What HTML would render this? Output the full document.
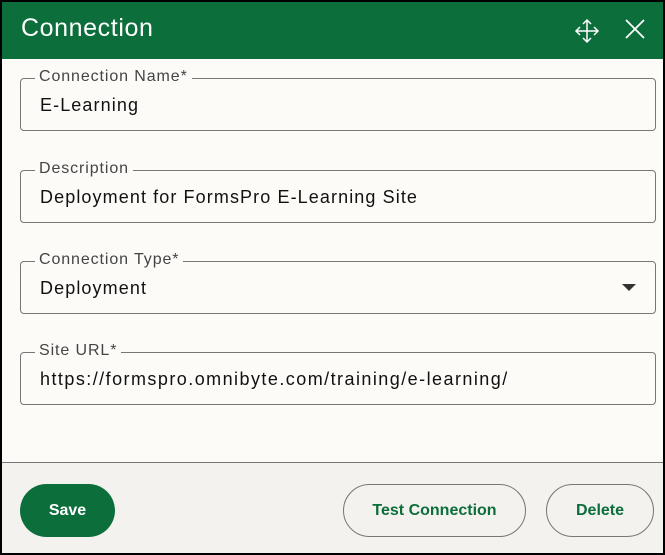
<!DOCTYPE html>
<html><head><style>
*{box-sizing:border-box;margin:0;padding:0}
body{width:665px;height:555px;background:#000;font-family:"Liberation Sans",sans-serif;overflow:hidden}
.win{position:absolute;left:2px;top:2px;width:661px;height:551px;background:#fcfbf8}
.hdr{position:absolute;left:0;top:0;width:661px;height:57px;background:#0c6e3b;color:#fff}
.hdr .t{position:absolute;left:19px;top:12px;font-size:25px;letter-spacing:0.6px}
.fld{position:absolute;left:18px;width:636px;height:53px;border:1px solid #777;border-radius:4px}
.fld .l{position:absolute;left:14px;top:-11px;background:#fcfbf8;padding:0 4px;font-size:16px;color:#444;letter-spacing:0.9px}
.fld .v{position:absolute;left:19px;top:16px;font-size:18px;color:#111;letter-spacing:1.1px}
.ftr{position:absolute;left:0;top:460px;width:661px;height:91px;background:#f3f2ef;border-top:1px solid #777}
.b{position:absolute;top:21px;height:53px;border-radius:27px;font-size:16px;font-weight:bold;display:flex;align-items:center;justify-content:center}
</style></head><body>
<div class="win">
<div class="hdr"><div class="t">Connection</div>
<svg style="position:absolute;left:572px;top:16px" width="26" height="26" viewBox="0 0 26 26" fill="none" stroke="#fff" stroke-width="1.5"><path d="M13 2V24M2 13H24M9 6L13 2L17 6M9 20L13 24L17 20M6 9L2 13L6 17M20 9L24 13L20 17"/></svg>
<svg style="position:absolute;left:623px;top:17px" width="20" height="20" viewBox="0 0 20 20" stroke="#fff" stroke-width="1.8"><path d="M1 1L19 19M19 1L1 19"/></svg>
</div>
<div class="fld" style="top:76px"><div class="l">Connection Name*</div><div class="v">E-Learning</div></div>
<div class="fld" style="top:168px"><div class="l">Description</div><div class="v">Deployment for FormsPro E-Learning Site</div></div>
<div class="fld" style="top:259px"><div class="l">Connection Type*</div><div class="v">Deployment</div>
<svg style="position:absolute;left:601px;top:22px" width="14" height="8"><path d="M0 0H14L7 7Z" fill="#333"/></svg></div>
<div class="fld" style="top:350px"><div class="l">Site URL*</div><div class="v" style="letter-spacing:1.45px">https://formspro.omnibyte.com/training/e-learning/</div></div>
<div class="ftr">
<div class="b" style="left:18px;width:95px;background:#0c6e3b;color:#fff">Save</div>
<div class="b" style="left:341px;width:183px;border:1px solid #777;color:#0c6e3b">Test Connection</div>
<div class="b" style="left:544px;width:108px;border:1px solid #777;color:#0c6e3b">Delete</div>
</div>
</div>
</body></html>
